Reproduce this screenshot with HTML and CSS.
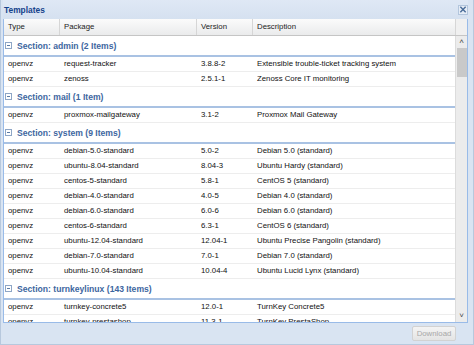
FILE: index.html
```html
<!DOCTYPE html>
<html lang="en">
<head>
  <meta charset="UTF-8">
  <title>Templates</title>
  <link rel="stylesheet" href="styles.css">
</head>
<body>
  <div class="win">
    <!-- title bar -->
    <div class="win-head">
      <span class="win-title">Templates</span>
      <span class="tool-close">
        <svg width="9" height="9" viewBox="0 0 9 9"><path d="M1.5 1.5 L7.5 7.5 M7.5 1.5 L1.5 7.5" stroke="#4b6d99" stroke-width="1.6" fill="none"/></svg>
      </span>
    </div>
    <!-- grid -->
    <div class="grid">
      <div class="grid-head">
        <div class="col">Type</div>
        <div class="col">Package</div>
        <div class="col">Version</div>
        <div class="col">Description</div>
        <div class="col-spacer"></div>
      </div>
      <div class="grid-body">
        <div class="rows">
          <div class="group"><span class="grp-icon"></span>Section: admin (2 Items)</div>
          <div class="row"><span>openvz</span><span>request-tracker</span><span>3.8.8-2</span><span>Extensible trouble-ticket tracking system</span></div>
          <div class="row"><span>openvz</span><span>zenoss</span><span>2.5.1-1</span><span>Zenoss Core IT monitoring</span></div>
          <div class="group"><span class="grp-icon"></span>Section: mail (1 Item)</div>
          <div class="row"><span>openvz</span><span>proxmox-mailgateway</span><span>3.1-2</span><span>Proxmox Mail Gateway</span></div>
          <div class="group"><span class="grp-icon"></span>Section: system (9 Items)</div>
          <div class="row"><span>openvz</span><span>debian-5.0-standard</span><span>5.0-2</span><span>Debian 5.0 (standard)</span></div>
          <div class="row"><span>openvz</span><span>ubuntu-8.04-standard</span><span>8.04-3</span><span>Ubuntu Hardy (standard)</span></div>
          <div class="row"><span>openvz</span><span>centos-5-standard</span><span>5.8-1</span><span>CentOS 5 (standard)</span></div>
          <div class="row"><span>openvz</span><span>debian-4.0-standard</span><span>4.0-5</span><span>Debian 4.0 (standard)</span></div>
          <div class="row"><span>openvz</span><span>debian-6.0-standard</span><span>6.0-6</span><span>Debian 6.0 (standard)</span></div>
          <div class="row"><span>openvz</span><span>centos-6-standard</span><span>6.3-1</span><span>CentOS 6 (standard)</span></div>
          <div class="row"><span>openvz</span><span>ubuntu-12.04-standard</span><span>12.04-1</span><span>Ubuntu Precise Pangolin (standard)</span></div>
          <div class="row"><span>openvz</span><span>debian-7.0-standard</span><span>7.0-1</span><span>Debian 7.0 (standard)</span></div>
          <div class="row"><span>openvz</span><span>ubuntu-10.04-standard</span><span>10.04-4</span><span>Ubuntu Lucid Lynx (standard)</span></div>
          <div class="group"><span class="grp-icon"></span>Section: turnkeylinux (143 Items)</div>
          <div class="row"><span>openvz</span><span>turnkey-concrete5</span><span>12.0-1</span><span>TurnKey Concrete5</span></div>
          <div class="row"><span>openvz</span><span>turnkey-prestashop</span><span>11.3-1</span><span>TurnKey PrestaShop</span></div>
        </div>
        <!-- vertical scrollbar -->
        <div class="vscroll">
          <span class="arrow">&#708;</span>
          <div class="thumb"></div>
          <div class="track"></div>
          <span class="arrow">&#709;</span>
        </div>
      </div>
    </div>
    <!-- buttons -->
    <div class="win-foot">
      <button class="btn" disabled>Download</button>
    </div>
  </div>
</body>
</html>
```

FILE: styles.css
```css
body {
  margin: 0;
  padding: 0;
  background: #fff;
  font-family: 'Liberation Sans', Arial, sans-serif;
  overflow: hidden;
}
.win {
  width: 474px;
  height: 345px;
  box-sizing: border-box;
  background: #d9e4f2;
  border-left: 1px solid #b7c8dd;
  border-right: 1px solid #b7c8dd;
  border-bottom: 1px solid #b7c8dd;
  padding: 0 5px 0 2px;
  display: flex;
  flex-direction: column;
}
.win-head {
  height: 19px;
  display: flex;
  align-items: center;
  justify-content: space-between;
  padding: 0 1px 0 1px;
  background: linear-gradient(#dfe8f5, #d5e1f0);
}
.win-title {
  font-size: 8.4px;
  font-weight: 700;
  color: #15428b;
}
.tool-close {
  width: 10px;
  height: 10px;
  display: flex;
  align-items: center;
  justify-content: center;
  background: #e6edf6;
  border: 1px solid #b3c6dd;
  box-sizing: border-box;
  margin-right: -1px;
}
.grid {
  height: 303px;
  background: #fff;
  border: 1px solid #99bbe8;
  border-top: none;
  display: flex;
  flex-direction: column;
  overflow: hidden;
}
.grid-head {
  height: 16px;
  display: grid;
  grid-template-columns: 56px 137px 56px 1fr 11px;
  background: linear-gradient(#fbfbfb, #eaebec);
  border-bottom: 1px solid #c5c5c5;
  font-size: 7.8px;
  color: #222;
}
.grid-head .col {
  padding-left: 4px;
  line-height: 16px;
  border-right: 1px solid #d6d6d6;
}
.grid-head .col-spacer {
  background: #f0f0f0;
}
.grid-body {
  flex: 1;
  display: flex;
  overflow: hidden;
}
.rows {
  flex: 1;
  overflow: hidden;
}
.group {
  height: 19px;
  display: flex;
  align-items: center;
  border-bottom: 2px solid #a9c2e3;
  font-size: 8.6px;
  font-weight: 700;
  color: #3d66a0;
  padding-left: 1px;
}
.grp-icon {
  width: 5px;
  height: 5px;
  border: 1px solid #8ea6c6;
  margin-right: 5px;
  position: relative;
  background: #fff;
}
.grp-icon::after {
  content: '';
  position: absolute;
  left: 1px;
  top: 2px;
  width: 3px;
  height: 1px;
  background: #5a7aa5;
}
.row {
  height: 14px;
  display: grid;
  grid-template-columns: 56px 137px 56px 1fr;
  border-bottom: 1px solid #ededed;
  font-size: 7.8px;
  color: #111;
  line-height: 14px;
}
.row span {
  padding-left: 4px;
  white-space: nowrap;
  overflow: hidden;
}
.vscroll {
  width: 11px;
  background: #ececec;
  border-left: 1px solid #dcdcdc;
  display: flex;
  flex-direction: column;
  align-items: center;
}
.vscroll .arrow {
  height: 12px;
  font-size: 8px;
  line-height: 12px;
  color: #444;
}
.vscroll .thumb {
  width: 10px;
  height: 29px;
  background: #c9c9c9;
}
.vscroll .track {
  flex: 1;
}
.win-foot {
  flex: 1;
  display: flex;
  justify-content: flex-end;
  align-items: center;
  padding-right: 12px;
}
.btn {
  width: 44px;
  height: 15px;
  padding: 0;
  font-family: inherit;
  font-size: 7.8px;
  color: #a8a8a8;
  background: linear-gradient(#f4f4f4, #e4e4e4);
  border: 1px solid #d2d2d2;
  border-radius: 2px;
}
```
